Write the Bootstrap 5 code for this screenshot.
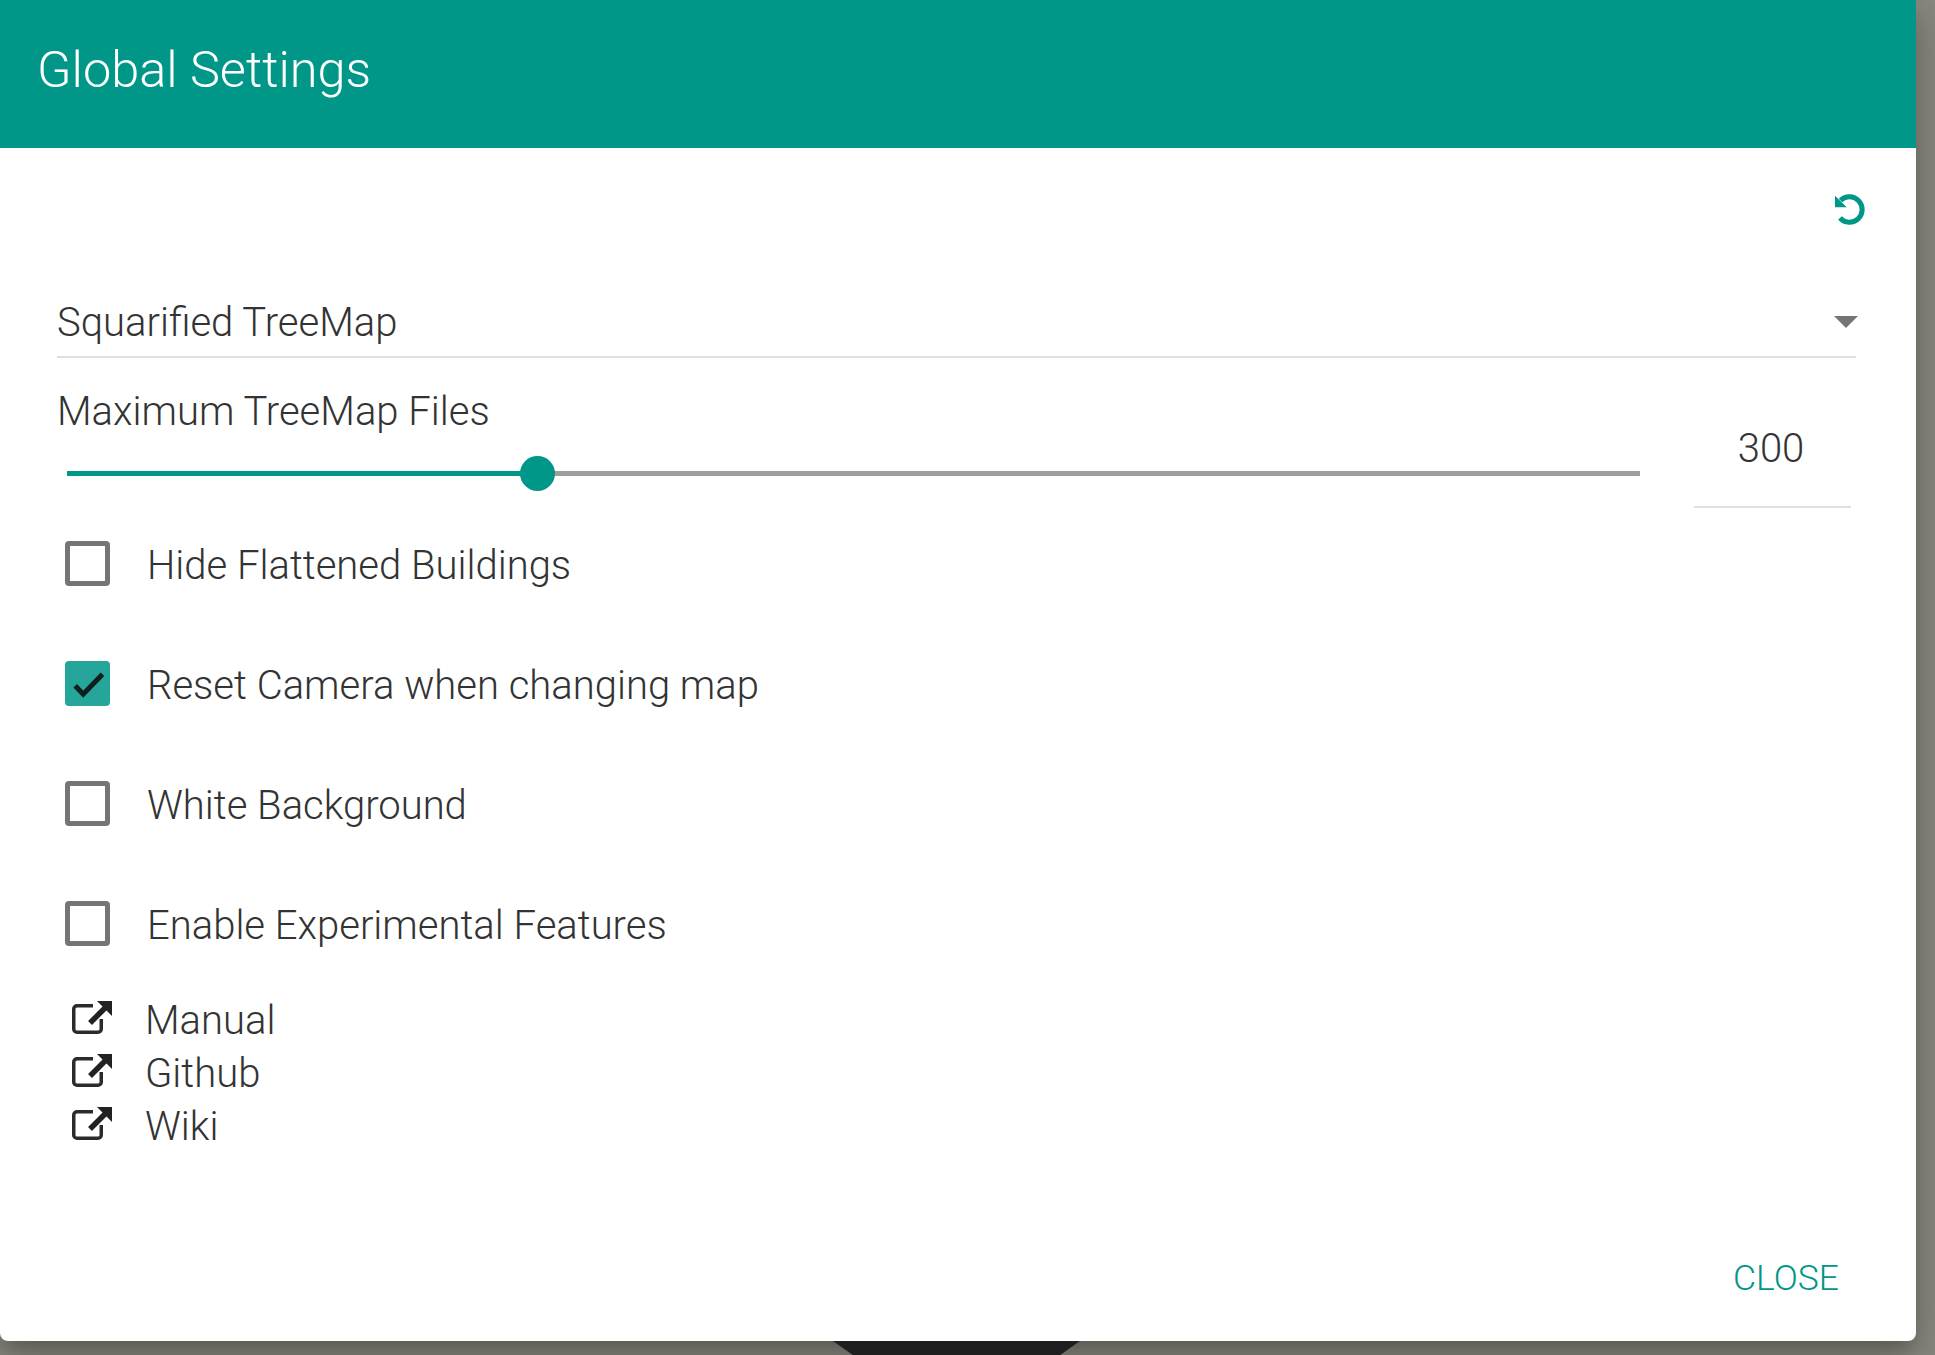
<!DOCTYPE html>
<html><head><meta charset="utf-8">
<link href="https://cdn.jsdelivr.net/npm/bootstrap@5.3.0/dist/css/bootstrap.min.css" rel="stylesheet">
<style>
html,body{height:100%;margin:0;overflow:hidden}
body{background:#8b8a80;font-family:Roboto,sans-serif;font-weight:300;color:#333;position:relative}
.dlg{width:1916px;height:1341px;background:#fff;border-radius:0 0 8px 8px;display:flex;flex-direction:column;position:relative;z-index:1;box-shadow:0 11px 15px -7px rgba(0,0,0,.2),0 24px 38px 3px rgba(0,0,0,.14),0 9px 46px 8px rgba(0,0,0,.12)}
.dlg-head{height:148px;background:#009688;color:#fff;font-size:50.5px;padding-left:37px;line-height:140px}
.dlg-body{flex:1;padding:0 60px 0 57px;position:relative;display:flex;flex-direction:column}
.reset-row{height:60px;margin-top:42px;display:flex;justify-content:flex-end;margin-right:-14px}
.sel{height:67px;margin-top:41px;border-bottom:2px solid #e0e0e0;font-size:40px;line-height:54px;display:flex;justify-content:space-between;align-items:center}
.sel-lbl{margin-top:-2px}
.sel-arrow{width:0;height:0;border-left:12px solid transparent;border-right:12px solid transparent;border-top:12px solid #757575;margin:-4px -2px 0 0}
.slide-row{display:flex;margin-top:32px;height:118px}
.slide-main{flex:1}
.slide-lbl{font-size:40px;line-height:44px}
.track{height:5px;margin:37px 0 0 10px;width:1573px;background:#9e9e9e;position:relative}
.track-on{position:absolute;left:0;top:0;bottom:0;background:#009688}
.thumb{position:absolute;width:35px;height:35px;border-radius:50%;background:#009688;top:-15px;margin-left:-17px}
.num{width:157px;margin:0 5px 0 54px;height:118px;border-bottom:2px solid #e0e0e0;font-size:40px;text-align:center;padding:37px 3px 0 0;line-height:44px}
.chk-list{margin-top:29px;display:flex;flex-direction:column;gap:68px;padding-left:8px}
.chk{display:flex;align-items:center;height:52px;font-size:40px}
.chk-txt{padding-top:5px}
.box{width:45px;height:45px;border:5px solid #757575;border-radius:4px;margin-right:37px;flex:none;display:flex;align-items:center;justify-content:center}
.box-on{background:#26a69a;border-color:#26a69a}
.box-on svg{margin-top:3px}
.lnks{margin-top:45px;padding-left:15px}
.lnk{height:53px;display:flex;align-items:center;font-size:40px}
.lnk svg{margin-right:33px;flex:none;position:relative;top:-3px}
.close-txt{position:absolute;right:77px;bottom:43px;color:#009688;font-size:35.5px;line-height:40px}
.blob{position:absolute;left:833px;top:1335px;width:247px;height:20px;background:#1f1f1f;clip-path:polygon(0 30%,100% 30%,92% 100%,8% 100%);z-index:2}
</style></head><body>
<div class="blob"></div>
<div class="dlg">
<div class="dlg-head">Global Settings</div>
<div class="dlg-body">
<div class="reset-row"><svg width="40" height="40" viewBox="0 0 40 40"><path d="M10 28A12.7 12.7 0 1 0 10.5 10.5" fill="none" stroke="#009688" stroke-width="5"/><path d="M5 5.7V17.3H16.7z" fill="#009688"/></svg></div>
<div class="sel"><span class="sel-lbl">Squarified TreeMap</span><span class="sel-arrow"></span></div>
<div class="slide-row">
<div class="slide-main"><div class="slide-lbl">Maximum TreeMap Files</div><div class="track"><div class="track-on" style="width:470px"></div><div class="thumb" style="left:470px"></div></div></div>
<div class="num">300</div>
</div>
<div class="chk-list">
<div class="chk"><span class="box"></span><span class="chk-txt">Hide Flattened Buildings</span></div>
<div class="chk"><span class="box box-on"><svg width="34" height="28" viewBox="0 0 34 28"><path d="M4.2 14.8l8 8.4L31.5 3.2" fill="none" stroke="#0d1f1f" stroke-width="5"/></svg></span><span class="chk-txt">Reset Camera when changing map</span></div>
<div class="chk"><span class="box"></span><span class="chk-txt">White Background</span></div>
<div class="chk"><span class="box"></span><span class="chk-txt">Enable Experimental Features</span></div>
</div>
<div class="lnks">
<div class="lnk"><svg width="40" height="33" viewBox="0 0 40 33"><path d="M21 4.75H5A3.25 3.25 0 0 0 1.75 8V28A3.25 3.25 0 0 0 5 31.25H26A3.25 3.25 0 0 0 29.25 28V18" fill="none" stroke="#2b2b2b" stroke-width="3.5"/><path d="M25 0H40V15z" fill="#222"/><path d="M33 7L18 22" stroke="#222" stroke-width="5.5"/></svg>Manual</div>
<div class="lnk"><svg width="40" height="33" viewBox="0 0 40 33"><path d="M21 4.75H5A3.25 3.25 0 0 0 1.75 8V28A3.25 3.25 0 0 0 5 31.25H26A3.25 3.25 0 0 0 29.25 28V18" fill="none" stroke="#2b2b2b" stroke-width="3.5"/><path d="M25 0H40V15z" fill="#222"/><path d="M33 7L18 22" stroke="#222" stroke-width="5.5"/></svg>Github</div>
<div class="lnk"><svg width="40" height="33" viewBox="0 0 40 33"><path d="M21 4.75H5A3.25 3.25 0 0 0 1.75 8V28A3.25 3.25 0 0 0 5 31.25H26A3.25 3.25 0 0 0 29.25 28V18" fill="none" stroke="#2b2b2b" stroke-width="3.5"/><path d="M25 0H40V15z" fill="#222"/><path d="M33 7L18 22" stroke="#222" stroke-width="5.5"/></svg>Wiki</div>
</div>
<div class="close-txt">CLOSE</div>
</div>
</div>
<script src="https://cdn.jsdelivr.net/npm/bootstrap@5.3.0/dist/js/bootstrap.bundle.min.js"></script>
</body></html>
